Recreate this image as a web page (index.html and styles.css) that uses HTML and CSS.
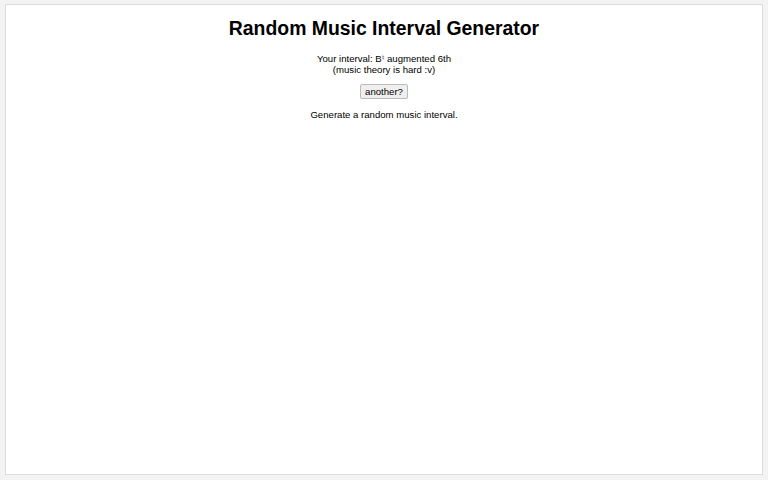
FILE: index.html
```html
<!DOCTYPE html>
<html lang="en">
<head>
    <meta charset="UTF-8">
    <title>Random Music Interval Generator</title>
    <link rel="stylesheet" href="styles.css">
</head>
<body>
<div class="page">
    <h1>Random Music Interval Generator</h1>
    <p class="interval">Your interval: B<sup>&#9838;</sup> augmented 6th<br>(music theory is hard :v)</p>
    <button type="button" class="another">another?</button>
    <p class="about">Generate a random music interval.</p>
</div>
</body>
</html>
```
FILE: styles.css
```css
html, body {
    height: 100%;
}

body {
    margin: 0;
    padding: 4px 5px 5px 5px;
    box-sizing: border-box;
    background-color: #f3f3f3;
    font-family: "Liberation Sans", Arial, sans-serif;
}

.page {
    height: 100%;
    box-sizing: border-box;
    background-color: #fff;
    border: 1px solid #dcdcdc;
    text-align: center;
    padding-top: 12px;
}

h1 {
    font-size: 19.4px;
    margin: 0 0 13px 0;
}

.interval {
    font-size: 9.6px;
    line-height: 11px;
    margin: 0 0 6px 0;
}

.interval sup {
    font-family: "DejaVu Sans", sans-serif;
    font-size: 7.5px;
    line-height: 0;
    vertical-align: 2px;
}

.another {
    font-family: "Liberation Sans", Arial, sans-serif;
    font-size: 9.6px;
    line-height: 11px;
    padding: 1px 4px;
    background-color: #efefef;
    border: 1px solid #bbb;
    border-radius: 2px;
}

.about {
    font-size: 9.6px;
    margin: 10px 0 0 0;
}
```
